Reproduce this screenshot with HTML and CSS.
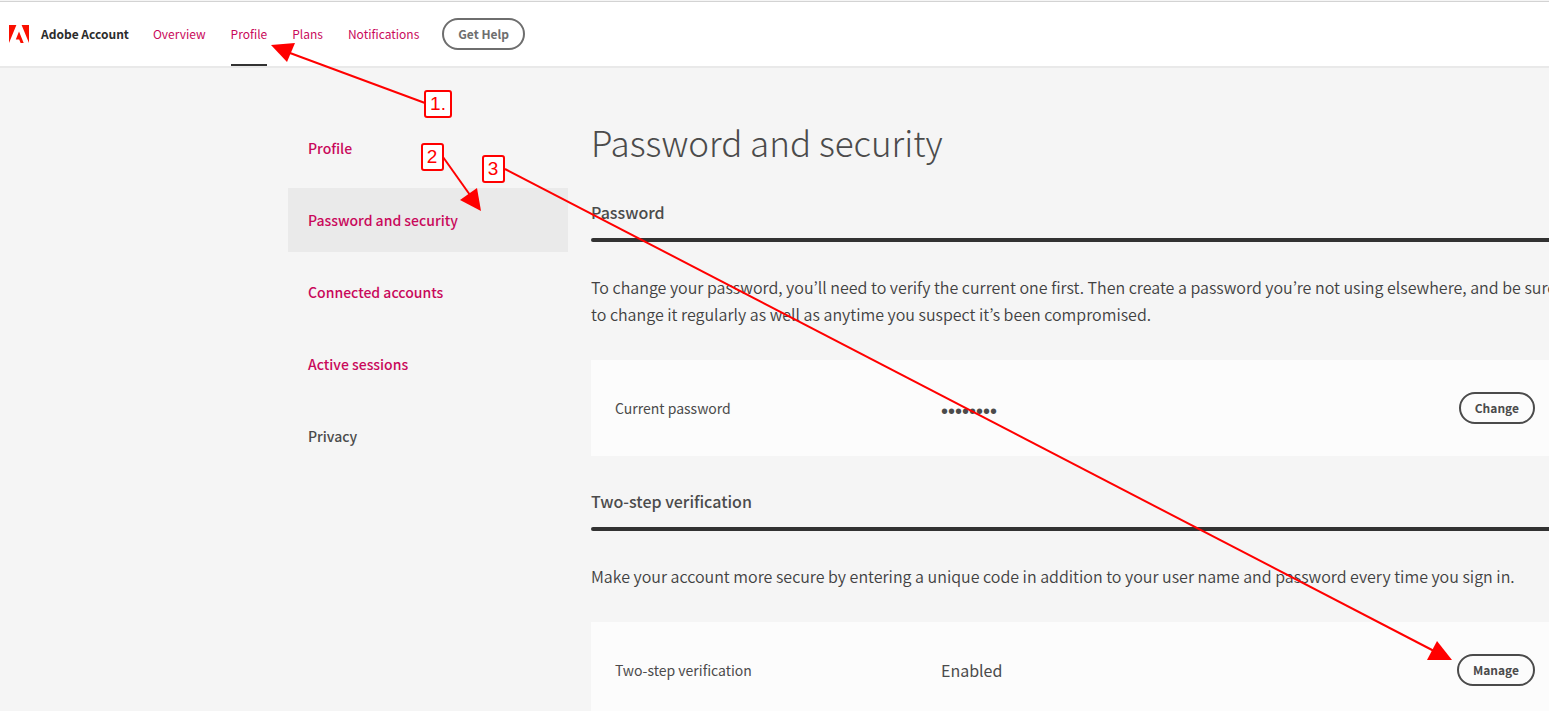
FILE: index.html
```html
<!DOCTYPE html>
<html lang="en">
<head>
    <meta charset="UTF-8">
    <meta name="viewport" content="width=device-width, initial-scale=1.0">
    <title>Adobe Account</title>
    <link rel="stylesheet" href="styles.css">
</head>
<body>
    <!-- Top navigation -->
    <header class="header">
        <a class="brand" href="#">
            <svg class="brand-logo" width="20" height="18" viewBox="0 0 20 18" aria-hidden="true">
                <path fill="#fa0f00" d="M0 0h7.4L0 18zM12.6 0H20v18zM10 6.6L14.7 18h-3.1l-1.4-3.6H6.8z"/>
            </svg>
            <span>Adobe Account</span>
        </a>
        <nav class="nav">
            <a class="nav-link" href="#">Overview</a>
            <a class="nav-link active" href="#">Profile</a>
            <a class="nav-link" href="#">Plans</a>
            <a class="nav-link" href="#">Notifications</a>
        </nav>
        <button class="button button-help" type="button">Get Help</button>
    </header>

    <div class="page">
        <!-- Side menu -->
        <nav class="sidebar">
            <a class="side-link" href="#">Profile</a>
            <a class="side-link selected" href="#">Password and security</a>
            <a class="side-link" href="#">Connected accounts</a>
            <a class="side-link" href="#">Active sessions</a>
            <a class="side-link plain" href="#">Privacy</a>
        </nav>

        <main class="main">
            <h1>Password and security</h1>

            <section class="section">
                <h2>Password</h2>
                <p>To change your password, you’ll need to verify the current one first. Then create a password you’re not using elsewhere, and be sure to change it regularly as well as anytime you suspect it’s been compromised.</p>
                <div class="card">
                    <span class="card-label">Current password</span>
                    <span class="card-value dots">••••••••</span>
                    <button class="button" type="button">Change</button>
                </div>
            </section>

            <section class="section">
                <h2>Two-step verification</h2>
                <p>Make your account more secure by entering a unique code in addition to your user name and password every time you sign in.</p>
                <div class="card">
                    <span class="card-label">Two-step verification</span>
                    <span class="card-value">Enabled</span>
                    <button class="button" type="button">Manage</button>
                </div>
            </section>
        </main>
    </div>

    <!-- Step markers and arrows -->
    <svg class="steps" width="1549" height="711" viewBox="0 0 1549 711">
        <g class="step-line">
            <path d="M425 103L290 53"/>
            <path d="M443 157L470 195"/>
            <path d="M505 169L1434 651"/>
        </g>
        <g class="step-head">
            <path d="M271 45L295 43L287 62z"/>
            <path d="M481 211L460 200L477 188z"/>
            <path d="M1452 660L1427 660L1437 641z"/>
        </g>
        <g class="step-box">
            <rect x="425" y="91" width="26" height="26" rx="2"/>
            <rect x="422" y="144" width="21" height="26" rx="2"/>
            <rect x="483" y="156" width="21" height="26" rx="2"/>
        </g>
        <g class="step-text">
            <text x="438" y="110">1.</text>
            <text x="432" y="163">2</text>
            <text x="493" y="175">3</text>
        </g>
    </svg>
</body>
</html>
```
FILE: styles.css
```css
/* General */
* {
    box-sizing: border-box;
}

body {
    position: relative;
    min-height: 100vh;
    margin: 0;
    overflow: hidden;
    font-family: "Noto Sans CJK KR", "Open Sans", sans-serif;
    font-size: 16px;
    color: #4b4b4b;
    background: #f5f5f5;
}

a {
    color: #c9095b;
    text-decoration: none;
}

/* Header */
.header {
    display: flex;
    align-items: center;
    height: 67px;
    margin-top: 1px;
    padding-left: 9px;
    border-top: 1px solid #d3d3d3;
    border-bottom: 2px solid #e9e9e9;
    background: #ffffff;
    font-size: 12px;
    line-height: 64px;
}

.brand {
    display: flex;
    align-items: center;
    gap: 12px;
    margin-right: 24px;
    color: #2c2c2c;
    font-weight: 700;
}

.nav {
    display: flex;
    gap: 25px;
    margin-right: 23px;
}

.nav-link {
    height: 64px;
}

.nav-link.active {
    border-bottom: 2px solid #323232;
}

/* Buttons */
.button {
    height: 32px;
    padding: 0 14px;
    border: 2px solid #4b4b4b;
    border-radius: 16px;
    background: transparent;
    color: #4b4b4b;
    font-family: inherit;
    font-size: 12px;
    font-weight: 700;
    line-height: 20px;
    cursor: pointer;
}

.button-help {
    border-color: #6e6e6e;
    color: #6e6e6e;
}

/* Layout */
.page {
    display: flex;
    gap: 23px;
    padding: 48px 0 0 288px;
}

.sidebar {
    display: flex;
    flex-direction: column;
    flex: 0 0 280px;
    gap: 8px;
}

.side-link {
    height: 64px;
    padding: 0 20px;
    font-size: 14px;
    font-weight: 500;
    line-height: 64px;
}

.side-link.selected {
    background: #eaeaea;
}

.side-link.plain {
    color: #4b4b4b;
}

.main {
    flex: 1;
    min-width: 0;
    margin-right: -10px;
}

h1 {
    margin: 0 0 32px;
    font-size: 35px;
    font-weight: 200;
    line-height: 52px;
}

/* Sections */
.section {
    margin-bottom: 33px;
}

h2 {
    margin: 0;
    font-size: 16px;
    font-weight: 500;
    line-height: 24px;
}

h2::after {
    content: "";
    display: block;
    height: 4px;
    margin-top: 14px;
    border-radius: 2px 0 0 2px;
    background: #323232;
}

.section p {
    margin: 32px 0;
    color: #414141;
    font-weight: 350;
    line-height: 27px;
}

.card {
    display: grid;
    grid-template-columns: 326px 1fr auto;
    align-items: center;
    height: 96px;
    padding: 0 24px;
    background: #fcfcfc;
}

.card-label {
    font-size: 14px;
}

.dots {
    padding-top: 6px;
    font-family: "Liberation Sans", sans-serif;
    font-size: 20px;
}

/* Step markers */
.steps {
    position: absolute;
    top: 0;
    left: 0;
    pointer-events: none;
}

.step-line {
    stroke: #ff0000;
    stroke-width: 2;
}

.step-head {
    fill: #ff0000;
}

.step-box {
    fill: #ffffff;
    stroke: #ff0000;
    stroke-width: 2;
}

.step-text {
    fill: #ff0000;
    font-family: "Liberation Sans", sans-serif;
    font-size: 19px;
    text-anchor: middle;
}
```
